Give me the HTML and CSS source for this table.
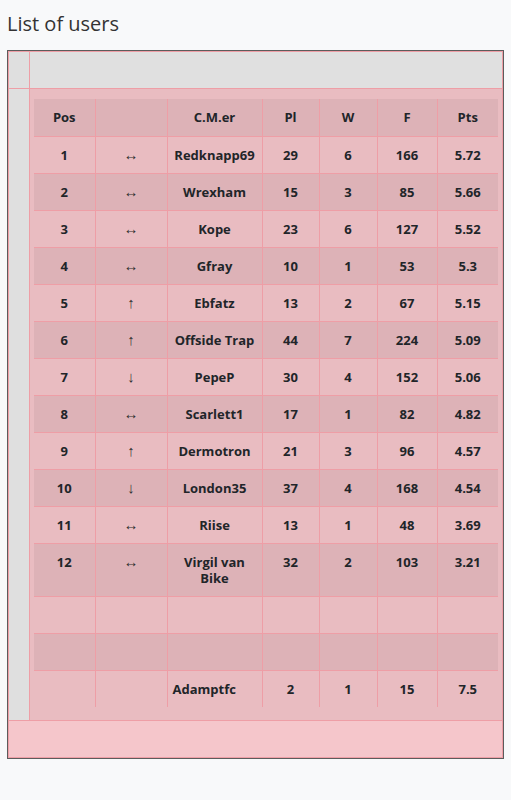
FILE: index.html
```html
<!DOCTYPE html>
<html lang="en">
<head>
<meta charset="utf-8">
<title>List of users</title>
<link rel="stylesheet" href="styles.css">
</head>
<body>
<h1 class="page-title">List of users</h1>
<div class="frame">
  <div class="side-cell"></div>
  <div class="top-cell"></div>
  <div class="side-cell"></div>
  <div class="main-cell">
    <table class="league">
      <colgroup>
        <col class="c-pos"><col class="c-move"><col class="c-name"><col class="c-pl"><col class="c-w"><col class="c-f"><col class="c-pts">
      </colgroup>
      <tr class="head stripe"><th>Pos</th><th></th><th>C.M.er</th><th>Pl</th><th>W</th><th>F</th><th>Pts</th></tr>
      <tr><td>1</td><td class="move">↔</td><td>Redknapp69</td><td>29</td><td>6</td><td>166</td><td>5.72</td></tr>
      <tr class="stripe"><td>2</td><td class="move">↔</td><td>Wrexham</td><td>15</td><td>3</td><td>85</td><td>5.66</td></tr>
      <tr><td>3</td><td class="move">↔</td><td>Kope</td><td>23</td><td>6</td><td>127</td><td>5.52</td></tr>
      <tr class="stripe"><td>4</td><td class="move">↔</td><td>Gfray</td><td>10</td><td>1</td><td>53</td><td>5.3</td></tr>
      <tr><td>5</td><td class="move">↑</td><td>Ebfatz</td><td>13</td><td>2</td><td>67</td><td>5.15</td></tr>
      <tr class="stripe"><td>6</td><td class="move">↑</td><td>Offside Trap</td><td>44</td><td>7</td><td>224</td><td>5.09</td></tr>
      <tr><td>7</td><td class="move">↓</td><td>PepeP</td><td>30</td><td>4</td><td>152</td><td>5.06</td></tr>
      <tr class="stripe"><td>8</td><td class="move">↔</td><td>Scarlett1</td><td>17</td><td>1</td><td>82</td><td>4.82</td></tr>
      <tr><td>9</td><td class="move">↑</td><td>Dermotron</td><td>21</td><td>3</td><td>96</td><td>4.57</td></tr>
      <tr class="stripe"><td>10</td><td class="move">↓</td><td>London35</td><td>37</td><td>4</td><td>168</td><td>4.54</td></tr>
      <tr><td>11</td><td class="move">↔</td><td>Riise</td><td>13</td><td>1</td><td>48</td><td>3.69</td></tr>
      <tr class="stripe"><td>12</td><td class="move">↔</td><td>Virgil van Bike</td><td>32</td><td>2</td><td>103</td><td>3.21</td></tr>
      <tr><td>&nbsp;</td><td></td><td></td><td></td><td></td><td></td><td></td></tr>
      <tr class="stripe"><td>&nbsp;</td><td></td><td></td><td></td><td></td><td></td><td></td></tr>
      <tr class="last"><td>&nbsp;</td><td></td><td class="left">Adamptfc</td><td>2</td><td>1</td><td>15</td><td>7.5</td></tr>
    </table>
  </div>
  <div class="bottom-cell"></div>
</div>
</body>
</html>
```

FILE: styles.css
```css
html, body {
  margin: 0;
  background: #f8f9fa;
}
body {
  padding: 11px 7px 0;
  font-family: "Open Sans", "Noto Sans", sans-serif;
  color: #212529;
}
.page-title {
  margin: 0 0 14px;
  font-size: 20px;
  line-height: 25px;
  font-weight: 400;
  color: #333;
}
.frame {
  border: 1px solid #5c5c5c;
  background: #ee9ea6;
  padding: 1px;
  display: grid;
  grid-template-columns: 20px 1fr;
  grid-template-rows: 36px auto 36px;
  gap: 1px;
}
.side-cell { background: #dfdfdf; }
.top-cell { background: #e0e0e0; }
.main-cell {
  background: #e9bcc1;
  padding: 10px 4px 13px;
}
.bottom-cell {
  grid-column: 1 / -1;
  background: #f5c6cb;
}
.league {
  border-collapse: collapse;
  table-layout: fixed;
  width: 464px;
  font-size: 13px;
  line-height: 16px;
  font-weight: 700;
}
.c-pos { width: 61px; }
.c-move { width: 72px; }
.c-name { width: 95px; }
.c-pl { width: 57px; }
.c-w { width: 58px; }
.c-f { width: 60px; }
.c-pts { width: 61px; }
.league th, .league td {
  padding: 10px 4px;
  text-align: center;
  vertical-align: top;
  border-top: 1px solid #ee9ea6;
  border-left: 1px solid #ee9ea6;
}
.league th { padding-bottom: 11px; border-top: 0; }
.league th:first-child, .league td:first-child { border-left: 0; }
.league tr.stripe { background: #ddb2b7; }
.league td.move {
  font-family: "Liberation Sans", sans-serif;
  font-weight: 400;
  font-size: 15px;
  color: #333;
}
.league td.left { text-align: left; padding-left: 5px; }
```
